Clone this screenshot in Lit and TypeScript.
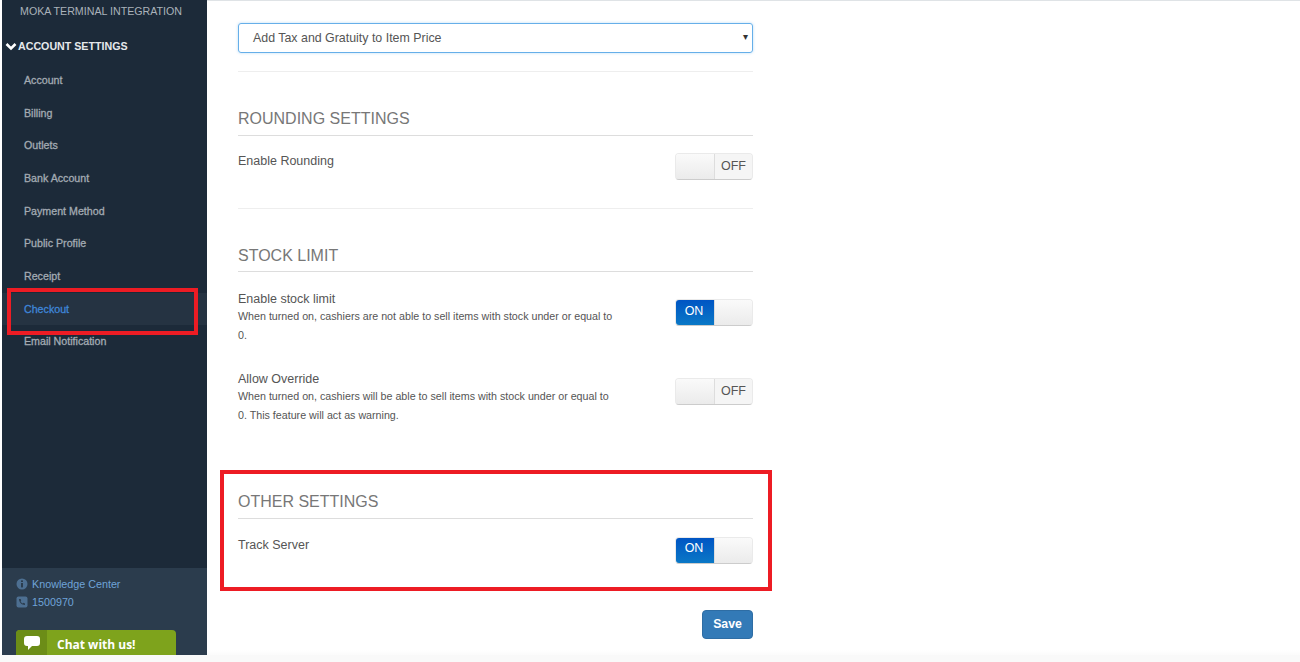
import { LitElement, html, css } from "lit";
import { customElement } from "lit/decorators.js";

const items = ["Account","Billing","Outlets","Bank Account","Payment Method","Public Profile","Receipt","Checkout","Email Notification"];

@customElement("app-root")
export class AppRoot extends LitElement {
  static styles = css`
    :host { display: block; position: relative; width: 1300px; height: 662px; overflow: hidden; background: #f9f9f9; font-family: "Liberation Sans", Arial, sans-serif; color: #555; }
    .page { display: flex; height: 655px; padding-left: 2px; box-sizing: border-box; background: linear-gradient(#fff, #fff 650px, #fbfbfb); }
    .side { width: 205px; background: #1c2a39; display: flex; flex-direction: column; flex: none; overflow: hidden; }
    .top { font-size: 10.67px; color: #aab2ba; padding: 4px 0 0 18px; height: 14px; line-height: 14px; }
    .group { font-size: 10.67px; font-weight: bold; color: #e6e9ec; margin-top: 21px; height: 14px; line-height: 14px; display: flex; align-items: center; gap: 1px; padding-left: 3px; }
    .nav { margin-top: 11px; display: flex; flex-direction: column; }
    .nav div { height: 32.66px; line-height: 32.66px; font-size: 10.67px; -webkit-text-stroke: .3px currentColor; color: #a3abb3; padding-left: 22px; }
    .nav div.on { color: #3f86d8; background: #253342; }
    .foot { margin-top: auto; height: 87px; background: #2b3c4d; box-sizing: border-box; padding: 7px 0 0 14px; position: relative; }
    .foot .ln { display: flex; align-items: center; gap: 4px; font-size: 10.75px; color: #6fa3d8; height: 18px; }
    .chat { position: absolute; left: 14px; top: 62px; width: 160px; height: 30px; background: #7ea31c; border-radius: 4px 4px 0 0; display: flex; overflow: hidden; }
    .chat .ic { width: 31px; background: #6c8d17; display: flex; align-items: flex-start; justify-content: center; padding-top: 6px; box-sizing: border-box; }
    .chat .t { font-family: "Open Sans", sans-serif; font-weight: bold; font-size: 12px; color: #fff; padding: 6px 0 0 10px; }
    .main { flex: 1; border-top: 1px solid #dfe3e6; padding: 22px 0 0 31px; box-sizing: border-box; }
    .col { width: 515px; display: flex; flex-direction: column; }
    .sel { height: 30px; border: 1px solid #66afe9; border-radius: 3px; box-shadow: 0 0 3px rgba(102,175,233,.45); box-sizing: border-box; display: flex; align-items: center; justify-content: space-between; padding: 0 4px 0 14px; font-size: 12.4px; color: #555; }
    .sel .car { font-size: 10px; color: #333; line-height: 10px; margin-top: -2px; }
    hr { border: 0; border-top: 1px solid #eee; margin: 0; }
    h3 { margin: 0; font-size: 16px; font-weight: normal; color: #777; height: 27px; line-height: 20px; border-bottom: 1px solid #ddd; box-sizing: border-box; }
    h3.short { height: 26px; }
    .row { display: flex; justify-content: space-between; align-items: flex-start; }
    .lab { font-size: 12.5px; color: #555; line-height: 16px; padding-top: 1px; }
    .desc { font-size: 10.7px; color: #555; line-height: 18.5px; width: 380px; }
    .tog { width: 78px; height: 27px; border-radius: 4px; display: flex; overflow: hidden; flex: none; box-sizing: border-box; border: 1px solid #eaeaea; border-bottom: 1px solid #ccc; background: linear-gradient(#fff, #eee); font-size: 12.5px; }
    .tog .k { flex: 1; background: linear-gradient(#fafafa, #ebebeb); }
    .tog .off { width: 37px; text-align: center; line-height: 25px; color: #555; background: #f5f5f5; border-left: 1px solid #ddd; }
    .tog .on { width: 39px; padding-right: 2px; box-sizing: border-box; text-align: center; line-height: 23px; color: #fff; background: linear-gradient(#0055c4, #0a78c6); border-right: 1px solid #ddd; }
    .t1 { margin-top: 9px; } .t2 { margin-top: 8px; } .t3 { margin-top: 1px; }
    .on-up .on { line-height: 21px; }
    .save { align-self: flex-end; width: 51px; height: 29px; border-radius: 4px; background: #337ab7; border: 1px solid #2e6da4; box-sizing: border-box; color: #fff; font-size: 12.3px; font-weight: bold; line-height: 26px; text-align: center; margin-top: 46px; }
    .mark { position: absolute; border: 4px solid #ed1c24; box-sizing: border-box; }
    .m1 { left: 7px; top: 288px; width: 191px; height: 47px; }
    .m2 { left: 220px; top: 470px; width: 552px; height: 121px; }
    .mt18 { margin-top: 18px; } .mt37 { margin-top: 37px; } .mt17 { margin-top: 17px; } .mt28 { margin-top: 28px; } .mt26 { margin-top: 26px; } .mt68 { margin-top: 68px; }
    .up { margin-top: -1px; }
  `;
  chev() { return html`<svg width="12" height="9" viewBox="0 0 12 9"><path d="M1.5 2 6 6.5 10.5 2" fill="none" stroke="#fff" stroke-width="2.6"/></svg>`; }
  info() { return html`<svg width="12" height="12" viewBox="0 0 12 12"><circle cx="6" cy="6" r="5.5" fill="#4d6f91"/><rect x="5" y="5" width="2" height="4.4" fill="#2b3c4d"/><rect x="5" y="2.4" width="2" height="1.6" fill="#2b3c4d"/></svg>`; }
  phone() { return html`<svg width="12" height="12" viewBox="0 0 12 12"><rect x=".5" y=".5" width="11" height="11" rx="2" fill="#4d6f91"/><path d="M3 3c0 3.2 2.6 6 6 6V7.4L7.4 6.8 6.8 7.5A4 4 0 0 1 4.6 5.2L5.2 4.6 4.6 3Z" fill="#2b3c4d"/></svg>`; }
  tog(on: boolean, cls = "") {
    return on
      ? html`<div class="tog ${cls}"><div class="on">ON</div><div class="k"></div></div>`
      : html`<div class="tog ${cls}"><div class="k"></div><div class="off">OFF</div></div>`;
  }
  render() {
    return html`
      <div class="page">
        <aside class="side">
          <div class="top">MOKA TERMINAL INTEGRATION</div>
          <div class="group">${this.chev()}ACCOUNT SETTINGS</div>
          <div class="nav">${items.map(i => html`<div class=${i === "Checkout" ? "on" : ""}>${i}</div>`)}</div>
          <div class="foot">
            <div class="ln">${this.info()}Knowledge Center</div>
            <div class="ln">${this.phone()}1500970</div>
            <div class="chat">
              <div class="ic"><svg width="16" height="14" viewBox="0 0 16 14"><path d="M3 0h10a3 3 0 0 1 3 3v4a3 3 0 0 1-3 3H8l-4 4v-4H3a3 3 0 0 1-3-3V3a3 3 0 0 1 3-3Z" fill="#fff"/></svg></div>
              <div class="t">Chat with us!</div>
            </div>
          </div>
        </aside>
        <main class="main">
          <div class="col">
            <div class="sel"><span>Add Tax and Gratuity to Item Price</span><span class="car">▾</span></div>
            <hr class="mt18">
            <h3 class="mt37">ROUNDING SETTINGS</h3>
            <div class="row mt17"><div class="lab up">Enable Rounding</div>${this.tog(false)}</div>
            <hr class="mt28">
            <h3 class="mt37 short">STOCK LIMIT</h3>
            <div class="row mt18"><div><div class="lab">Enable stock limit</div><div class="desc">When turned on, cashiers are not able to sell items with stock under or equal to 0.</div></div>${this.tog(true, "t1")}</div>
            <div class="row mt26"><div><div class="lab">Allow Override</div><div class="desc">When turned on, cashiers will be able to sell items with stock under or equal to 0. This feature will act as warning.</div></div>${this.tog(false, "t2")}</div>
            <h3 class="mt68">OTHER SETTINGS</h3>
            <div class="row mt17"><div class="lab">Track Server</div>${this.tog(true, "t3 on-up")}</div>
            <div class="save">Save</div>
          </div>
        </main>
      </div>
      <div class="mark m1"></div>
      <div class="mark m2"></div>
    `;
  }
}
